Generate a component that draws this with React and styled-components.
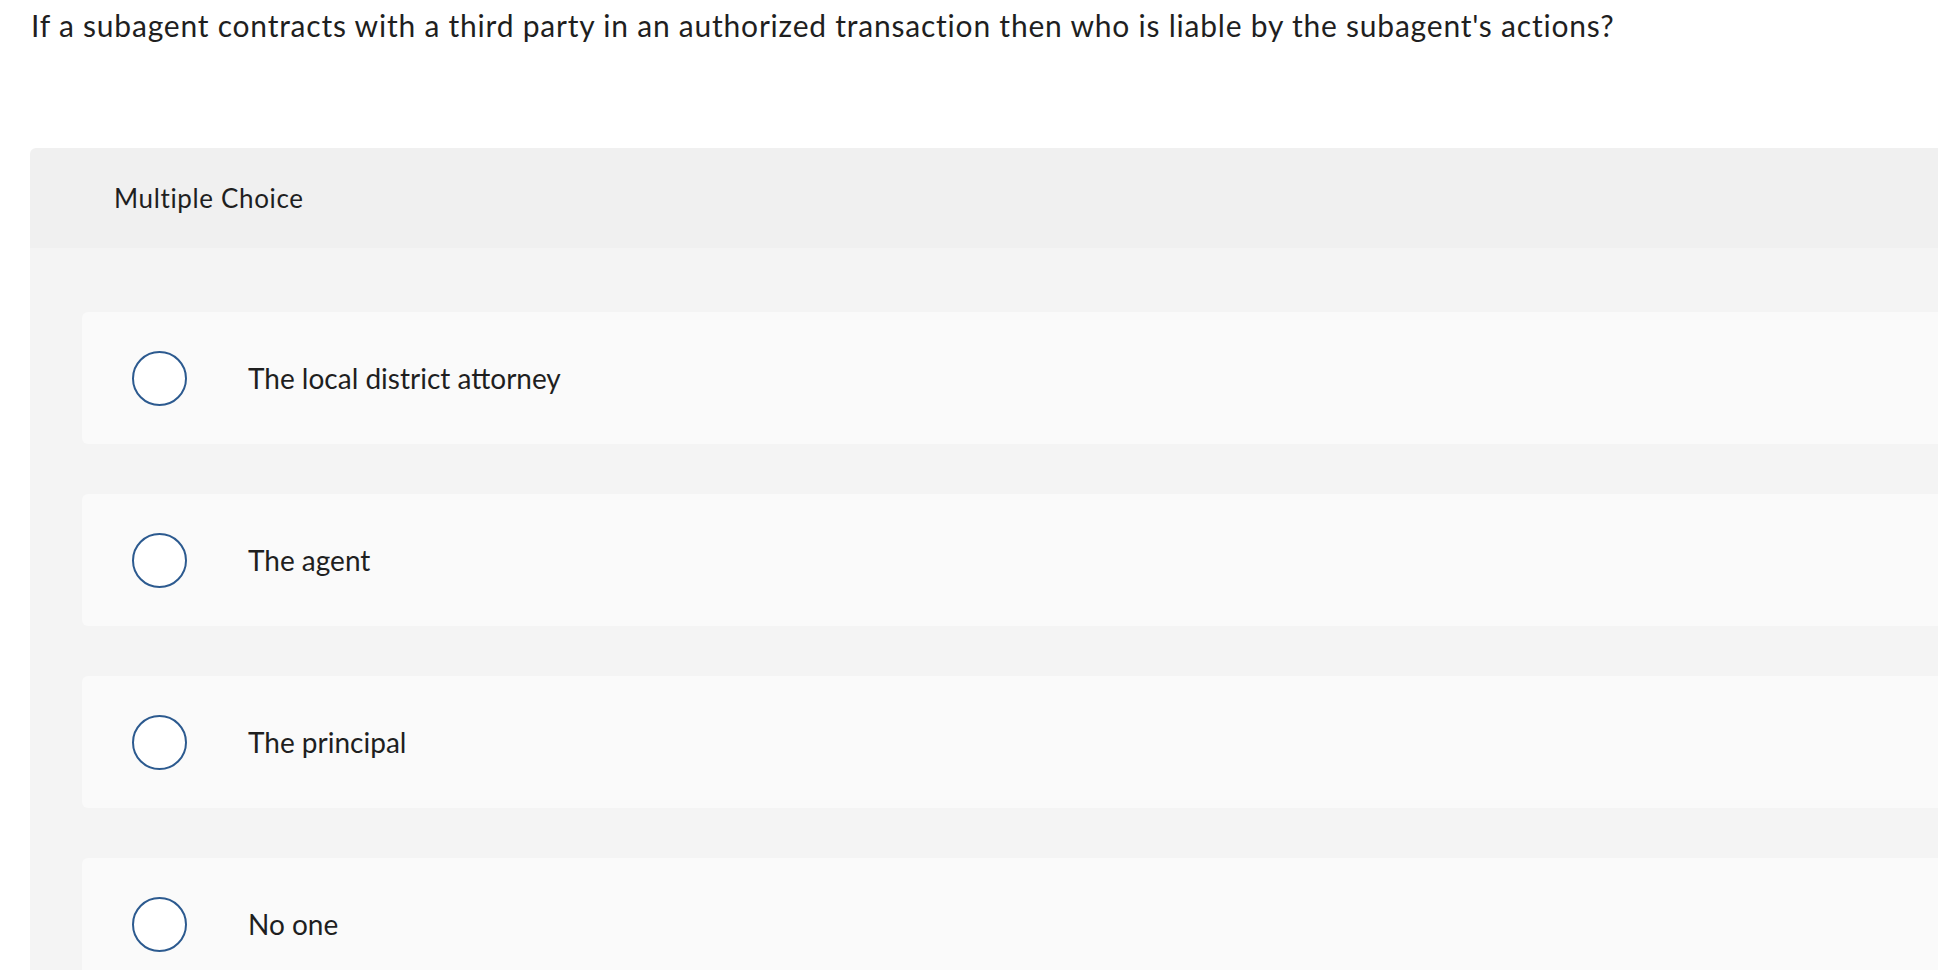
import React from 'react';
import styled, { createGlobalStyle } from 'styled-components';

const GlobalStyle = createGlobalStyle`
    html, body {
        margin: 0;
        padding: 0;
        background: #ffffff;
        overflow: hidden;
    }
    body {
        font-family: Lato, "Open Sans", Arial, sans-serif;
        color: #1f1f1f;
    }
`;

const Page = styled.div`
    padding-left: 30px;
`;

const Question = styled.p`
    margin: 0;
    padding-left: 1px;
    font-size: 30px;
    letter-spacing: 0.78px;
    line-height: 50px;
    white-space: nowrap;
`;

const Panel = styled.div`
    margin-top: 98px;
    width: 2000px;
    border-radius: 6px 6px 0 0;
    overflow: hidden;
`;

const PanelHeader = styled.div`
    height: 100px;
    background: #f0f0f0;
    padding-left: 84px;
    display: flex;
    align-items: center;
    font-size: 26px;
    letter-spacing: 0.65px;
`;

const Choices = styled.div`
    background: #f4f4f4;
    padding: 64px 0 60px 52px;
    display: flex;
    flex-direction: column;
    gap: 50px;
`;

const Choice = styled.label`
    height: 132px;
    background: #fafafa;
    border-radius: 6px;
    display: flex;
    align-items: center;
    padding-left: 50px;
    cursor: pointer;
`;

const Radio = styled.span`
    flex: none;
    width: 55px;
    height: 55px;
    box-sizing: border-box;
    border-radius: 50%;
    border: 2px solid #2c5a8f;
    background: #ffffff;
    margin-right: 61px;
`;

const ChoiceText = styled.span`
    font-size: 28px;
`;

const options = [
    'The local district attorney',
    'The agent',
    'The principal',
    'No one',
];

const App = () => (
    <Page>
        <GlobalStyle />
        <Question>
            If a subagent contracts with a third party in an authorized transaction then who is liable by the subagent's actions?
        </Question>
        <Panel>
            <PanelHeader>Multiple Choice</PanelHeader>
            <Choices>
                {options.map(text => (
                    <Choice key={text}>
                        <Radio />
                        <ChoiceText>{text}</ChoiceText>
                    </Choice>
                ))}
            </Choices>
        </Panel>
    </Page>
);

export default App;
